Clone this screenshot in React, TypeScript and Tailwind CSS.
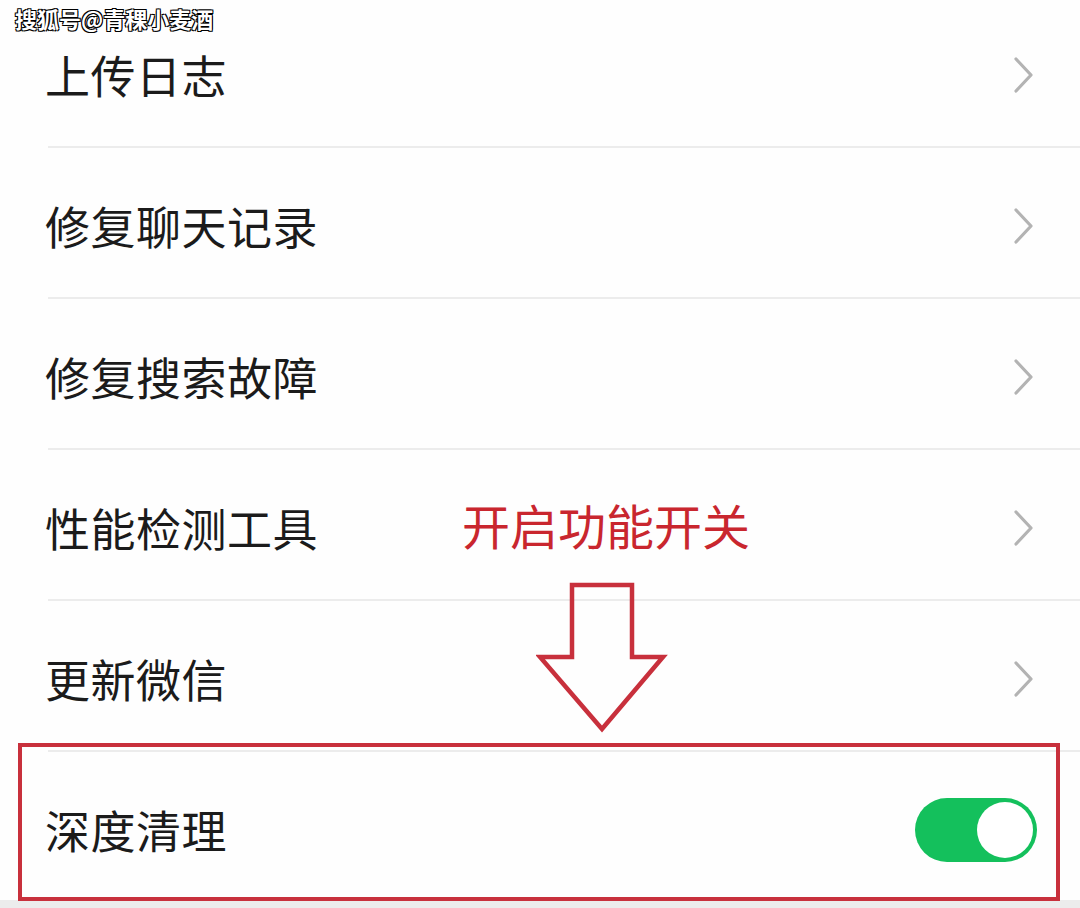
const items = ['上传日志', '修复聊天记录', '修复搜索故障', '性能检测工具', '更新微信'];

function Chevron() {
  return (
    <svg width="22" height="38" viewBox="0 0 22 38" fill="none">
      <polyline points="4,3 19,19 4,35" stroke="#b3b3b3" strokeWidth="3.2" strokeLinecap="round" strokeLinejoin="round" />
    </svg>
  );
}

export default function App() {
  return (
    <div className="relative w-[1080px] h-[908px] overflow-hidden bg-[#fefefe] text-[#1b1b1b] font-['Noto_Sans_CJK_SC','Noto_Sans',sans-serif]">
      <div className="-mt-[3px]">
        {items.map((label) => (
          <div key={label} className="ml-[48px] h-[151px] border-b-2 border-[#ececec] flex items-center justify-between pr-[46px] pt-[6px]">
            <span className="-ml-[3px] text-[45px] leading-none tracking-[0.5px]">{label}</span>
            <Chevron />
          </div>
        ))}
        <div className="ml-[45px] h-[151px] flex items-center justify-between pr-[43px] pt-[4px]">
          <span className="text-[45px] leading-none tracking-[0.5px]">深度清理</span>
          <div className="w-[122px] h-[64px] rounded-full bg-[#14c05c] flex items-center justify-end pr-[4px]">
            <div className="w-[56px] h-[56px] rounded-full bg-white" />
          </div>
        </div>
      </div>
      <div className="absolute left-0 right-0 bottom-0 h-[8px] bg-[#ececec]" />

      {/* annotation */}
      <div className="absolute left-[18px] top-[743px] w-[1042px] h-[158px] border-4 border-[#c8303c]" />
      <div className="absolute left-[462px] top-[500px] text-[48px] leading-none text-[#c9262e]">开启功能开关</div>
      <svg className="absolute left-[536px] top-[580px]" width="132" height="154" viewBox="0 0 132 154">
        <polygon points="36,5 96,5 96,77 127,77 66,149 4,77 36,77" fill="none" stroke="#c8303c" strokeWidth="4.5" strokeLinejoin="miter" />
      </svg>

      <div className="absolute left-[15px] top-[7px] text-[22px] font-bold leading-none text-white [text-shadow:1px_1px_0_#000,-1px_-1px_0_#000,1px_-1px_0_#000,-1px_1px_0_#000]">
        搜狐号@青稞小麦酒
      </div>
    </div>
  );
}
